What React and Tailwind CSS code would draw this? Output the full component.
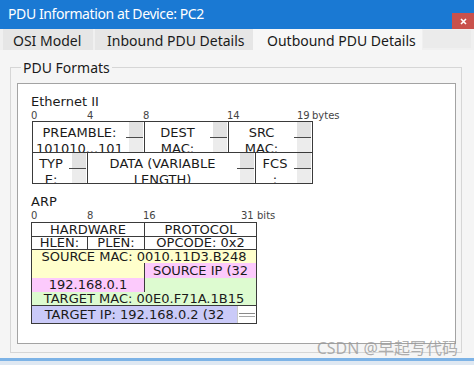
import React from 'react';

const mono = { fontFamily: '"DejaVu Sans", Verdana, sans-serif' };

// petite barre de défilement dans chaque champ de la trame Ethernet
function MiniScroll() {
  return (
    <div className="flex w-[18px] flex-col pr-[1px]">
      <div className="ml-[3px] flex-1 bg-[#e2e2e2]" />
      <div className="h-px bg-[#4a4a4a]" />
      <div className="ml-[3px] flex-1 bg-[#ececec]" />
    </div>
  );
}

function EthCell({ className, lines }) {
  return (
    <div className={`flex h-full ${className}`}>
      <div className="flex-1 overflow-hidden whitespace-nowrap pt-[3px] text-center text-[13px] leading-[16px] text-[#1a1a1a]">
        {lines.map((l) => (
          <div key={l}>{l}</div>
        ))}
      </div>
      <MiniScroll />
    </div>
  );
}

function Ethernet() {
  return (
    <div>
      <div className="text-[13px] leading-[16px] text-[#1a1a1a]">Ethernet II</div>
      <div className="flex h-[11px] text-[10px] leading-[11px] text-[#444]">
        <span className="w-[56px]">0</span>
        <span className="w-[56px]">4</span>
        <span className="w-[84px]">8</span>
        <span className="w-[70px]">14</span>
        <span className="w-[15px]">19</span>
        <span>bytes</span>
      </div>
      <div className="ml-[1px] w-[281px] border border-[#3a3a3a]">
        <div className="flex h-[31px] border-b border-[#3a3a3a]">
          <EthCell className="w-[112px] border-r border-[#3a3a3a]" lines={['PREAMBLE:', '101010...101']} />
          <EthCell className="w-[84px] border-r border-[#3a3a3a]" lines={['DEST', 'MAC:']} />
          <EthCell className="flex-1" lines={['SRC', 'MAC:']} />
        </div>
        <div className="flex h-[30px]">
          <EthCell className="w-[55px] border-r border-[#3a3a3a]" lines={['TYP', 'E:']} />
          <EthCell className="w-[168px] border-r border-[#3a3a3a]" lines={['DATA (VARIABLE', 'LENGTH)']} />
          <EthCell className="flex-1" lines={['FCS', ':']} />
        </div>
      </div>
    </div>
  );
}

function Arp() {
  return (
    <div className="mt-[10px]">
      <div className="text-[13px] leading-[16px] text-[#1a1a1a]">ARP</div>
      <div className="flex h-[12px] text-[10px] leading-[12px] text-[#444]">
        <span className="w-[56px]">0</span>
        <span className="w-[56px]">8</span>
        <span className="w-[98px]">16</span>
        <span className="w-[16px]">31</span>
        <span>bits</span>
      </div>
      <div className="w-[226px] border border-[#3a3a3a] text-center text-[13px] text-[#1a1a1a] whitespace-nowrap">
        <div className="flex h-[14px] border-b border-[#3a3a3a] leading-[13px]">
          <div className="w-[113px] border-r border-[#3a3a3a]">HARDWARE</div>
          <div className="flex-1">PROTOCOL</div>
        </div>
        <div className="flex h-[13px] border-b border-[#3a3a3a] leading-[12px]">
          <div className="w-[56px] border-r border-[#3a3a3a]">HLEN:</div>
          <div className="w-[57px] border-r border-[#3a3a3a]">PLEN:</div>
          <div className="flex-1">OPCODE: 0x2</div>
        </div>
        <div className="h-[13px] bg-[#ffffcc] leading-[13px]">SOURCE MAC: 0010.11D3.B248</div>
        <div className="flex h-[15px] leading-[15px]">
          <div className="w-[113px] border-r border-[#3a3a3a] bg-[#ffffcc]" />
          <div className="flex-1 bg-[#fccafc]">SOURCE IP (32</div>
        </div>
        <div className="flex h-[14px] leading-[14px]">
          <div className="w-[113px] border-r border-[#3a3a3a] bg-[#fccafc]">192.168.0.1</div>
          <div className="flex-1 bg-[#ddfbd0]" />
        </div>
        <div className="h-[14px] border-b border-[#3a3a3a] bg-[#ddfbd0] leading-[13px]">
          TARGET MAC: 00E0.F71A.1B15
        </div>
        <div className="flex h-[17px] leading-[17px]">
          <div className="flex-1 bg-[#cacaf8]">TARGET IP: 192.168.0.2 (32</div>
          <div className="flex w-[19px] flex-col justify-center gap-[2px] border-l border-[#c8c8c8] bg-white px-[1px]">
            <div className="h-px bg-[#8a8a8a]" />
            <div className="h-px bg-[#a8a8a8]" />
          </div>
        </div>
      </div>
    </div>
  );
}

export default function App() {
  return (
    <div
      className="relative flex h-[365px] w-[474px] flex-col overflow-hidden bg-[#f5f5f5]"
      style={{ fontFamily: '"Noto Sans", "Open Sans", sans-serif' }}
    >
      {/* Barre de titre */}
      <div className="flex h-[29px] justify-between bg-[#1a79d3]">
        <div className="pl-[8px] pt-[4px] text-[14px] leading-[20px] tracking-[-0.4px] text-white">
          PDU Information at Device: PC2
        </div>
        <div className="mt-[13px] flex h-[16px] w-[22px] items-center justify-center bg-[#c9514c]">
          <svg width="7" height="7" viewBox="0 0 7 7">
            <path d="M1 1L6 6M6 1L1 6" stroke="white" strokeWidth="1.6" />
          </svg>
        </div>
      </div>

      {/* Onglets */}
      <div className="flex h-[21px] bg-[#f0f0f0] text-[14px] leading-[19px] text-[#1a1a1a]">
        <div className="ml-[3px] w-[90px] bg-[#e6e6e6] pl-[10px] pt-[2px]">OSI Model</div>
        <div className="ml-[2px] w-[158px] bg-[#e6e6e6] pl-[12px] pt-[2px]">Inbound PDU Details</div>
        <div className="w-[169px] bg-[#f7f7f7] pl-[14px] pt-[2px]">Outbound PDU Details</div>
        <div className="ml-[1px] mt-[1px] h-[18px] w-[48px] bg-[#ebebeb]" />
      </div>

      {/* Contenu */}
      <div className="flex-1">
        <fieldset className="ml-[10px] mt-[8px] w-[452px] border border-[#d6d6d6] pb-[8px] pl-[6px] pr-[5px] pt-[6px]">
          <legend className="ml-[4px] px-[2px] text-[14px] leading-[19px] text-[#1a1a1a]">PDU Formats</legend>
          <div className="h-[261px] w-[439px] border border-[#a3a3a3] bg-white pl-[13px] pt-[10px]" style={mono}>
            <Ethernet />
            <Arp />
          </div>
        </fieldset>
      </div>

      <div className="h-[7px] border-t-[3px] border-[#7db3e6] bg-[#dfe8f2]" />

      <div
        className="pointer-events-none absolute bottom-[7px] right-[16px] text-[16px] leading-[20px] text-[#9a9a9a]/80"
        style={{ fontFamily: '"Noto Sans", "Noto Sans CJK SC", sans-serif' }}
      >
        CSDN @早起写代码
      </div>
    </div>
  );
}
